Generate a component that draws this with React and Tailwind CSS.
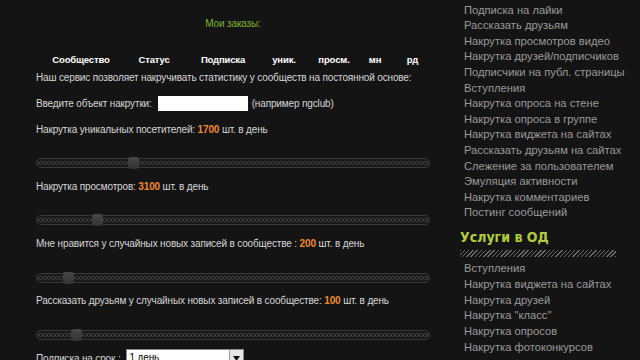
import React from "react";

const sideTop = [
  "Накрутка лайков",
  "Подписка на лайки",
  "Рассказать друзьям",
  "Накрутка просмотров видео",
  "Накрутка друзей/подписчиков",
  "Подписчики на публ. страницы",
  "Вступления",
  "Накрутка опроса на стене",
  "Накрутка опроса в группе",
  "Накрутка виджета на сайтах",
  "Рассказать друзьям на сайтах",
  "Слежение за пользователем",
  "Эмуляция активности",
  "Накрутка комментариев",
  "Постинг сообщений",
];

const sideOd = [
  "Вступления",
  "Накрутка виджета на сайтах",
  "Накрутка друзей",
  "Накрутка \"класс\"",
  "Накрутка опросов",
  "Накрутка фотоконкурсов",
];

function Slider({ pos }) {
  return (
    <div className="relative h-[10px] w-[394px] rounded-full border border-[#383838] bg-[#1a1a1a] bg-[radial-gradient(circle,transparent_0.8px,#3a3a3a_1.2px,#3a3a3a_1.8px,transparent_2.2px)] bg-[length:4px_8px] bg-center">
      <div
        className="absolute top-[-2px] h-[12px] w-[11px] rounded-[3px] bg-gradient-to-b from-[#474747] to-[#333333]"
        style={{ left: pos }}
      />
    </div>
  );
}

export default function App() {
  const font = { fontFamily: "'Liberation Sans', Arial, sans-serif" };
  return (
    <div
      className="flex h-[360px] w-[640px] overflow-hidden bg-[#141414] text-[10px] tracking-[-0.15px] text-[#d6d6d6]"
      style={font}
    >
      <div className="flex w-[455px] flex-col">
        <div className="mt-[17px] h-[14px] pl-[11px] text-center leading-[14px] text-[#7db52a]">
          Мои заказы:
        </div>
        <div className="ml-[44px] mt-[22px] grid h-[14px] grid-cols-[74px_72px_66px_56px_44px_38px_37px] text-center text-[9.5px] font-bold leading-[14px] text-white">
          <span>Сообщество</span>
          <span>Статус</span>
          <span>Подписка</span>
          <span>уник.</span>
          <span>просм.</span>
          <span>мн</span>
          <span>рд</span>
        </div>
        <div className="flex flex-col pl-[36px]">
          <div className="mt-[4px] h-[14px] leading-[14px]">
            Наш сервис позволяет накручивать статистику у сообществ на постоянной основе:
          </div>
          <div className="mt-[11px] flex h-[15px] items-center">
            <span>Введите объект накрутки:</span>
            <span className="ml-[6px] h-[15px] w-[90px] bg-white" />
            <span className="ml-[4px]">(например ngclub)</span>
          </div>
          <div className="mt-[12px] h-[14px] leading-[14px]">
            Накрутка уникальных посетителей: <b className="text-[#ef8a2c]">1700</b> шт. в день
          </div>
          <div className="mt-[21px]">
            <Slider pos={91} />
          </div>
          <div className="mt-[12px] h-[14px] leading-[14px]">
            Накрутка просмотров: <b className="text-[#ef8a2c]">3100</b> шт. в день
          </div>
          <div className="mt-[21px]">
            <Slider pos={55} />
          </div>
          <div className="mt-[12px] h-[14px] leading-[14px]">
            Мне нравится у случайных новых записей в сообществе : <b className="text-[#ef8a2c]">200</b> шт. в день
          </div>
          <div className="mt-[22px]">
            <Slider pos={26} />
          </div>
          <div className="mt-[11px] h-[14px] leading-[14px]">
            Рассказать друзьям у случайных новых записей в сообществе: <b className="text-[#ef8a2c]">100</b> шт. в день
          </div>
          <div className="mt-[22px]">
            <Slider pos={34} />
          </div>
          <div className="mt-[9px] flex items-start">
            <span className="mt-[2px]">Подписка на срок :</span>
            <div className="ml-[5px] flex h-[18px] w-[118px] border border-[#888] bg-white text-black">
              <span className="flex-1 pl-[3px] leading-[16px]">1 день</span>
              <span className="flex w-[14px] items-center justify-center border-l border-[#999] bg-[#e8e8e8]">
                <svg width="7" height="5" viewBox="0 0 7 5">
                  <path d="M0 0h7L3.5 5z" fill="#111" />
                </svg>
              </span>
            </div>
          </div>
        </div>
      </div>
      <div className="flex flex-1 flex-col pl-[5px] tracking-normal">
        <ul className="mt-[-13px] pl-[4px] text-[11.2px] leading-[15.6px] text-[#9a9a9a]">
          {sideTop.map((t, i) => (
            <li key={i}>{t}</li>
          ))}
        </ul>
        <div
          className="mt-[8px] h-[17px] text-[14px] font-bold leading-[17px] text-[#b3cb3b]"
          style={{ fontFamily: "'DejaVu Sans Condensed', 'Liberation Sans', sans-serif" }}
        >
          Услуги в ОД
        </div>
        <div className="mt-[4px] h-[7px] w-[156px] bg-[repeating-linear-gradient(135deg,#6a6a6a_0px,#6a6a6a_1px,transparent_1px,transparent_3px)]" />
        <ul className="mt-[4px] pl-[4px] text-[11.2px] leading-[15.8px] text-[#9a9a9a]">
          {sideOd.map((t, i) => (
            <li key={i}>{t}</li>
          ))}
        </ul>
      </div>
    </div>
  );
}
